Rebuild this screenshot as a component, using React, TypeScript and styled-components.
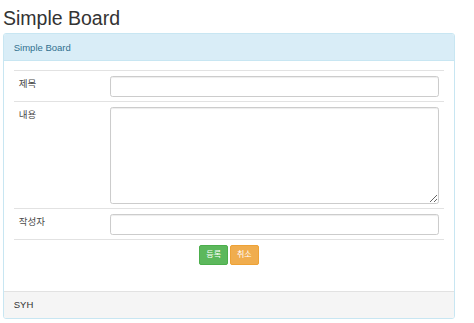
import React from "react"
import styled, { createGlobalStyle } from "styled-components"

const GlobalStyle = createGlobalStyle`
  body {
    margin: 0;
    background: #ffffff;
    font-family: "Liberation Sans", "Noto Sans CJK KR", sans-serif;
    color: #333333;
  }
`

const Page = styled.div`
  width: 452px;
  margin-left: 3px;
`

const Title = styled.h2`
  margin: 7px 0 4px 0;
  font-size: 19.5px;
  font-weight: 400;
  line-height: 22px;
  color: #333333;
`

const Panel = styled.div`
  border: 1px solid #c8e6f2;
  border-radius: 3px;
  background: #ffffff;
  overflow: hidden;
`

const PanelHeading = styled.div`
  padding: 6.5px 9.75px;
  background: #d9edf7;
  color: #31708f;
  border-bottom: 1px solid #c8e6f2;
  font-size: 9.5px;
  line-height: 13px;
`

const PanelBody = styled.div`
  padding: 9px 9.75px 10px 9.75px;
`

const FormTable = styled.div`
  margin-bottom: 11px;
`

const Row = styled.div<{ $center?: boolean }>`
  display: ${(p) => (p.$center ? "flex" : "grid")};
  grid-template-columns: 91px 1fr;
  justify-content: center;
  gap: ${(p) => (p.$center ? "2px" : "0")};
  border-top: 1px solid #e2e2e2;
  padding: 5px 0 ${(p) => (p.$center ? "5px" : "4px")} 0;
`

const Label = styled.div`
  padding: 1px 5px 0 5px;
  font-size: 9.5px;
  line-height: 13px;
  color: #4a4a4a;
`

const Cell = styled.div`
  padding: 0 5px;
  display: flex;
`

const Input = styled.input`
  flex: 1;
  box-sizing: border-box;
  height: 21px;
  margin: 0;
  border: 1px solid #cccccc;
  border-radius: 2.6px;
  box-shadow: inset 0 1px 1px rgba(0, 0, 0, 0.075);
  background: #ffffff;
  font-family: inherit;
  font-size: 9px;
  padding: 0 8px;
`

const TextArea = styled.textarea`
  flex: 1;
  box-sizing: border-box;
  height: 97px;
  margin: 0;
  border: 1px solid #cccccc;
  border-radius: 2.6px;
  box-shadow: inset 0 1px 1px rgba(0, 0, 0, 0.075);
  background: #ffffff;
  font-family: inherit;
  font-size: 9px;
  padding: 4px 8px;
`

const Button = styled.button<{ $color: string; $border: string }>`
  margin: 0;
  padding: 3px 6px;
  height: 19.5px;
  border: 1px solid ${(p) => p.$border};
  border-radius: 2px;
  background: ${(p) => p.$color};
  color: #ffffff;
  font-family: "Liberation Sans", "Noto Sans CJK KR", sans-serif;
  font-size: 8px;
  line-height: 11px;
  cursor: pointer;
`

const PanelFooter = styled.div`
  padding: 6.5px 9.75px;
  background: #f5f5f5;
  border-top: 1px solid #e2e2e2;
  font-size: 9.5px;
  line-height: 13px;
  color: #333333;
`

const App: React.FC = () => {
  return (
    <Page>
      <GlobalStyle />
      <Title>Simple Board</Title>
      <Panel>
        <PanelHeading>Simple Board</PanelHeading>
        <PanelBody>
          <FormTable>
            <Row>
              <Label>제목</Label>
              <Cell>
                <Input type="text" />
              </Cell>
            </Row>
            <Row>
              <Label>내용</Label>
              <Cell>
                <TextArea />
              </Cell>
            </Row>
            <Row>
              <Label>작성자</Label>
              <Cell>
                <Input type="text" />
              </Cell>
            </Row>
            <Row $center>
              <Button $color="#5cb85c" $border="#4cae4c">등록</Button>
              <Button $color="#f0ad4e" $border="#eea236">취소</Button>
            </Row>
          </FormTable>
        </PanelBody>
        <PanelFooter>SYH</PanelFooter>
      </Panel>
    </Page>
  )
}

export default App
